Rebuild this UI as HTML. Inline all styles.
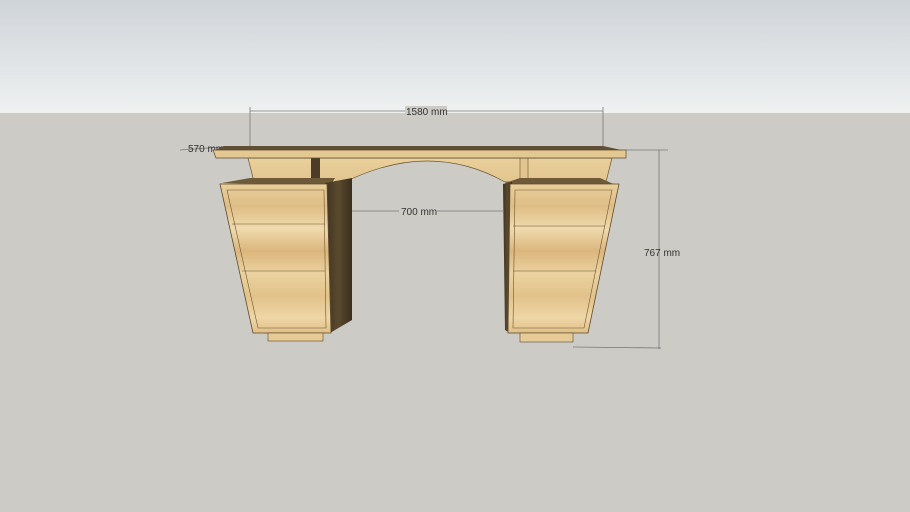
<!DOCTYPE html>
<html><head><meta charset="utf-8"><style>
html,body{margin:0;padding:0;width:910px;height:512px;overflow:hidden}
svg{display:block}
text{font-family:"Liberation Sans",sans-serif;font-size:10px;fill:#333}
</style></head><body>
<svg width="910" height="512" viewBox="0 0 910 512" xmlns="http://www.w3.org/2000/svg">
<defs>
<linearGradient id="sky" x1="0" y1="0" x2="0" y2="1"><stop offset="0" stop-color="#cfd4d9"/><stop offset="1" stop-color="#eff1f1"/></linearGradient>
<linearGradient id="wood" x1="0" y1="0" x2="0" y2="1">
<stop offset="0" stop-color="#e9cf9c"/><stop offset="0.15" stop-color="#dfbd85"/><stop offset="0.3" stop-color="#efdaae"/><stop offset="0.45" stop-color="#dcb67c"/><stop offset="0.6" stop-color="#ebd2a0"/><stop offset="0.75" stop-color="#e2c28a"/><stop offset="0.9" stop-color="#eed6a6"/><stop offset="1" stop-color="#e0bf86"/></linearGradient>
<linearGradient id="wood2" x1="0" y1="0" x2="0" y2="1"><stop offset="0" stop-color="#ead09c"/><stop offset="1" stop-color="#e2c48e"/></linearGradient>
<linearGradient id="dark" x1="0" y1="0" x2="1" y2="0"><stop offset="0" stop-color="#3f3320"/><stop offset="0.5" stop-color="#5a4a2e"/><stop offset="1" stop-color="#3a2e1c"/></linearGradient>
</defs>
<rect width="910" height="113" fill="url(#sky)"/>
<rect y="113" width="910" height="399" fill="#cccbc6"/>
<g stroke="#777" stroke-width="0.8" fill="none">
<line x1="250" y1="111" x2="603" y2="111"/>
<line x1="250" y1="107" x2="250" y2="146"/>
<line x1="603" y1="107" x2="603" y2="146"/>
<line x1="626" y1="150" x2="668" y2="150"/>
<line x1="659" y1="150" x2="659" y2="349"/>
<line x1="573" y1="347" x2="661" y2="348"/>
<line x1="352" y1="211" x2="503" y2="211"/>
<line x1="180" y1="150" x2="222" y2="147"/>
</g>
<rect x="405" y="106" width="42" height="10" fill="#cccbc6"/>
<text x="406" y="115">1580 mm</text>
<rect x="399" y="206" width="38" height="10" fill="#cccbc6"/>
<text x="401" y="215">700 mm</text>
<text x="644" y="256">767 mm</text>
<text x="188" y="152">570 mm</text>
<path d="M248 158 L612 158 L606 182 L520 182 L505 182 Q430 140 345 182 L320 182 L254 182 Z" fill="url(#wood2)" stroke="#6b5532" stroke-width="0.7"/>
<rect x="311" y="158" width="9" height="28" fill="#4a3c26"/>
<rect x="520" y="158" width="8" height="26" fill="#e2c48e" stroke="#6b5532" stroke-width="0.6"/>
<path d="M224 146 L603 146 L626 151 L213 151 Z" fill="#5e4f36"/>
<path d="M213 150 L626 150 L626 158 L216 158 Z" fill="#e4c892" stroke="#5c4a2c" stroke-width="0.7"/>
<path d="M222 183 L250 178 L335 178 L330 186 Z" fill="#6e5a3a"/>
<path d="M325 183 L352 178 L352 320 L330 333 Z" fill="url(#dark)"/>
<path d="M220 184 L327 184 L331 333 L253 333 Z" fill="url(#wood)" stroke="#5c4a2c" stroke-width="0.8"/>
<path d="M227 190 L324 190 L326 328 L258 328 Z" fill="none" stroke="#6b5532" stroke-width="0.6"/>
<line x1="232" y1="224" x2="325" y2="224" stroke="#6b5532" stroke-width="0.6"/>
<line x1="242" y1="271" x2="325" y2="271" stroke="#6b5532" stroke-width="0.6"/>
<rect x="268" y="333" width="55" height="8" fill="#e6cb96" stroke="#5c4a2c" stroke-width="0.6"/>
<path d="M505 183 L520 178 L600 178 L618 186 L510 186 Z" fill="#6e5a3a"/>
<path d="M503 184 L512 182 L510 333 L505 330 Z" fill="url(#dark)"/>
<path d="M510 184 L619 184 L588 333 L508 333 Z" fill="url(#wood)" stroke="#5c4a2c" stroke-width="0.8"/>
<path d="M515 190 L612 190 L584 328 L513 328 Z" fill="none" stroke="#6b5532" stroke-width="0.6"/>
<line x1="513" y1="226" x2="605" y2="226" stroke="#6b5532" stroke-width="0.6"/>
<line x1="513" y1="271" x2="596" y2="271" stroke="#6b5532" stroke-width="0.6"/>
<rect x="520" y="333" width="53" height="9" fill="#e6cb96" stroke="#5c4a2c" stroke-width="0.6"/>
</svg>
</body></html>
